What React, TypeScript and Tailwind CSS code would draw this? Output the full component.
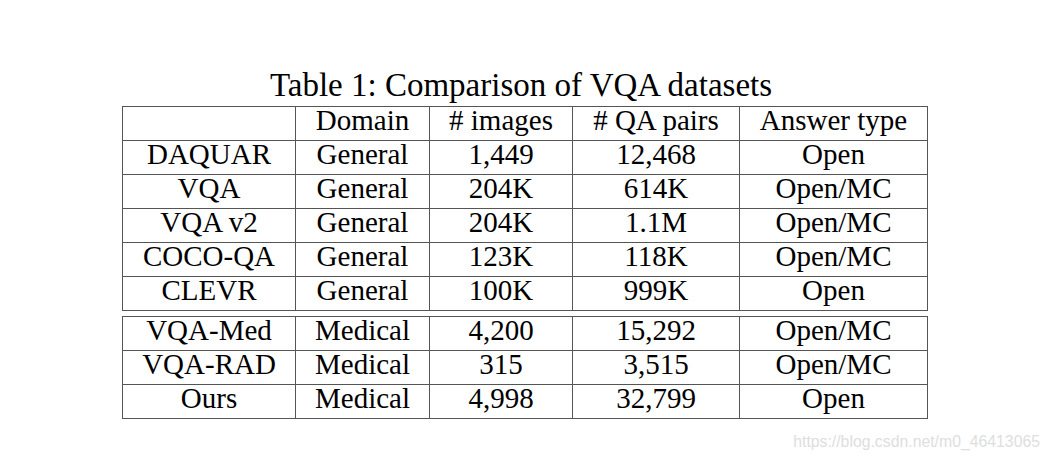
import React from 'react';

type Row = [string, string, string, string, string];

const header: Row = ['', 'Domain', '# images', '# QA pairs', 'Answer type'];

const generalRows: Row[] = [
  ['DAQUAR', 'General', '1,449', '12,468', 'Open'],
  ['VQA', 'General', '204K', '614K', 'Open/MC'],
  ['VQA v2', 'General', '204K', '1.1M', 'Open/MC'],
  ['COCO-QA', 'General', '123K', '118K', 'Open/MC'],
  ['CLEVR', 'General', '100K', '999K', 'Open'],
];

const medicalRows: Row[] = [
  ['VQA-Med', 'Medical', '4,200', '15,292', 'Open/MC'],
  ['VQA-RAD', 'Medical', '315', '3,515', 'Open/MC'],
  ['Ours', 'Medical', '4,998', '32,799', 'Open'],
];

const Cell: React.FC<{ text: string }> = ({ text }) => (
  <div className="h-[34px] border-r border-b border-[#555] flex justify-center items-start">
    <span className="whitespace-pre leading-[26px] text-[29px] text-black">{text}</span>
  </div>
);

const Block: React.FC<{ rows: Row[] }> = ({ rows }) => (
  <div className="grid grid-cols-[173px_134px_143px_167px_188px] border-l border-t border-[#555] w-[806px]">
    {rows.map((row, i) => (
      <React.Fragment key={i}>
        {row.map((c, j) => (
          <Cell key={j} text={c} />
        ))}
      </React.Fragment>
    ))}
  </div>
);

export default function App() {
  return (
    <div
      className="relative w-[1050px] h-[460px] bg-white overflow-hidden"
      style={{ fontFamily: '"Liberation Serif", "Times New Roman", serif' }}
    >
      <div className="flex flex-col items-center pt-[66px]">
        <div className="pr-[8px] text-[33px] leading-[38px] text-black mb-[2px]">
          Table 1: Comparison of VQA datasets
        </div>
        <Block rows={[header, ...generalRows]} />
        <div className="mt-[5px]">
          <Block rows={medicalRows} />
        </div>
      </div>
      <div
        className="absolute right-[10px] bottom-[8px] text-[15.8px] leading-[20px] text-[#dedede]"
        style={{ fontFamily: '"Liberation Sans", Arial, sans-serif' }}
      >
        https://blog.csdn.net/m0_46413065
      </div>
    </div>
  );
}
